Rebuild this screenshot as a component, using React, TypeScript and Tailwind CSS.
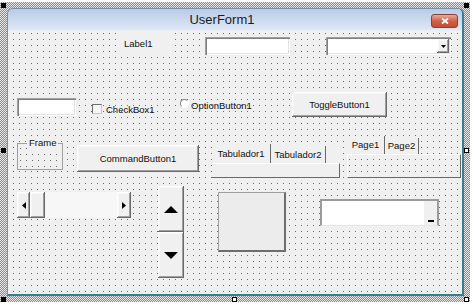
const raised =
  'bg-[#f0f0f0] shadow-[inset_-1px_-1px_#696969,inset_1px_1px_#ffffff,inset_-2px_-2px_#a0a0a0,inset_2px_2px_#f7f7f7]';
const sunken =
  'bg-white shadow-[inset_1px_1px_#a0a0a0,inset_2px_2px_#7f7f7f,inset_-1px_-1px_#ffffff,inset_-2px_-2px_#e3e3e3]';
const dots =
  'bg-[#f0f0f0] bg-[image:conic-gradient(at_1px_1px,transparent_75%,#6a6a6a_0)] bg-[length:6px_6px]';

function Tri({ dir, w, h }: { dir: 'up' | 'down' | 'left' | 'right'; w: number; h: number }) {
  const pts = {
    up: `0,${h} ${w / 2},0 ${w},${h}`,
    down: `0,0 ${w},0 ${w / 2},${h}`,
    left: `${w},0 ${w},${h} 0,${h / 2}`,
    right: `0,0 ${w},${h / 2} 0,${h}`,
  }[dir];
  return (
    <svg width={w} height={h} viewBox={`0 0 ${w} ${h}`} className="block">
      <polygon points={pts} fill="#000" />
    </svg>
  );
}

function Handle({ x, y, white }: { x: string; y: string; white?: boolean }) {
  return (
    <div
      className={`absolute w-[5px] h-[5px] ${x} ${y} ${
        white ? 'bg-white border border-black' : 'bg-black'
      }`}
    />
  );
}

function TitleBar() {
  return (
    <div className="h-[22px] flex items-center bg-gradient-to-b from-[#b8cbe8] to-[#dfe8f5] border-b border-[#e9eef6]">
      <div className="flex-1 pl-[5px] text-center text-[13px] leading-[16px] text-[#1c1c1c]">UserForm1</div>
      <div className="mr-[4px] mt-[2px] w-[27px] h-[14px] rounded-[3px] border border-[#8a4032] bg-gradient-to-b from-[#e6ab9a] via-[#cf6148] to-[#c24d33] flex items-center justify-center">
        <svg width="8" height="6" viewBox="0 0 8 6">
          <path d="M1 0.5 L7 5.5 M7 0.5 L1 5.5" stroke="#fff" strokeWidth="1.8" />
        </svg>
      </div>
    </div>
  );
}

export default function App() {
  return (
    <div className="relative w-[474px] h-[305px] overflow-hidden bg-white font-['Liberation_Sans',Arial,sans-serif] text-[9.5px] leading-[12px] text-[#111]">
      <div className="mt-[2px] w-[470px] h-[300px] pl-[7px] pt-[6px] pr-[6px] pb-[6px] bg-[image:repeating-conic-gradient(#8c8c8c_0_25%,#e6e6e6_0_50%)] bg-[length:2px_2px]">
        <div className="w-full h-full flex flex-col overflow-hidden rounded-t-[6px] border-l border-t border-[#7d8fa6] border-r-2 border-b-2 border-r-[#2f8197] border-b-[#2f8197]">
          <TitleBar />

          {/* design surface */}
          <div className={`relative flex-1 ${dots} bg-[position:5px_2px]`}>
            {/* Label1 */}
            <div className="absolute left-[108px] top-[1px] w-[54px] h-[24px] bg-[#f0f0f0] pl-[8px] pt-[6px]">Label1</div>

            {/* TextBox1 */}
            <div className={`absolute left-[197px] top-[6px] w-[85px] h-[18px] ${sunken}`} />

            {/* ComboBox1 */}
            <div className={`absolute left-[318px] top-[6px] w-[125px] h-[18px] ${sunken}`}>
              <div className={`absolute right-[2px] top-[2px] w-[12px] h-[14px] flex items-center justify-center ${raised}`}>
                <Tri dir="down" w={5} h={3} />
              </div>
            </div>

            {/* TextBox2 */}
            <div className={`absolute left-[9px] top-[67px] w-[59px] h-[18px] ${sunken}`} />

            {/* CheckBox1 */}
            <div className="absolute left-[84px] top-[71px] flex items-center gap-[4px]">
              <div className="w-[10px] h-[10px] bg-[#f7f7f7] border border-t-[#6f6f6f] border-l-[#6f6f6f] border-r-[#c8c8c8] border-b-[#c8c8c8]" />
              <span className="pt-[2px]">CheckBox1</span>
            </div>

            {/* OptionButton1 */}
            <div className="absolute left-[172px] top-[67px] flex items-start gap-[2px]">
              <div className="mt-[1px] w-[9px] h-[9px] rounded-full bg-white border border-t-[#7f7f7f] border-l-[#7f7f7f] border-r-white border-b-white" />
              <span className="pt-[2px]">OptionButton1</span>
            </div>

            {/* ToggleButton1 */}
            <div className={`absolute left-[284px] top-[61px] w-[95px] h-[25px] flex items-center justify-center ${raised}`}>
              ToggleButton1
            </div>

            {/* Frame1 */}
            <div className={`absolute left-[9px] top-[112px] w-[46px] h-[27px] border border-[#a0a0a0] ${dots} bg-[position:2px_4px]`}>
              <span className="absolute left-[9px] -top-[7px] px-[2px] bg-[#f0f0f0]">Frame</span>
            </div>

            {/* CommandButton1 */}
            <div className={`absolute left-[69px] top-[114px] w-[122px] h-[27px] flex items-center justify-center ${raised}`}>
              CommandButton1
            </div>

            {/* TabStrip1 */}
            <div className="absolute left-[204px] top-[113px] w-[128px] h-[34px] flex flex-col bg-[#f0f0f0]">
              <div className="h-[19px] flex items-start">
                <div className="h-[19px] w-[59px] border-r border-[#696969] flex items-center justify-center">Tabulador1</div>
                <div className="mt-[2px] h-[17px] w-[55px] border-r border-[#696969] flex items-center justify-center">Tabulador2</div>
              </div>
              <div className="flex-1 border-t border-t-white border-r border-b border-r-[#696969] border-b-[#696969]" />
            </div>

            {/* MultiPage1 */}
            <div className="absolute left-[337px] top-[105px] w-[116px] h-[42px] flex flex-col">
              <div className="h-[18px] flex items-start pl-[2px]">
                <div className="h-[18px] w-[38px] bg-[#f0f0f0] border-r border-[#696969] flex items-center justify-center">Page1</div>
                <div className="mt-[2px] h-[16px] w-[34px] bg-[#f0f0f0] border-r border-[#696969] flex items-center justify-center">Page2</div>
              </div>
              <div className={`ml-[2px] flex-1 border-t border-l border-t-white border-l-white border-r border-b border-r-[#696969] border-b-[#696969] ${dots} bg-[position:1px_4px]`} />
            </div>

            {/* ScrollBar1 */}
            <div className="absolute left-[9px] top-[161px] w-[114px] h-[26px] flex">
              <div className={`w-[13px] h-full flex items-center justify-center ${raised}`}>
                <Tri dir="left" w={4} h={7} />
              </div>
              <div className={`w-[15px] h-full ${raised}`} />
              <div className="flex-1 h-full bg-[#f7f7f7]" />
              <div className={`w-[14px] h-full flex items-center justify-center ${raised}`}>
                <Tri dir="right" w={4} h={7} />
              </div>
            </div>

            {/* SpinButton1 */}
            <div className="absolute left-[150px] top-[155px] w-[26px] h-[92px] flex flex-col">
              <div className={`h-[46px] flex items-center justify-center ${raised}`}>
                <Tri dir="up" w={14} h={7} />
              </div>
              <div className={`h-[46px] flex items-center justify-center ${raised}`}>
                <Tri dir="down" w={14} h={7} />
              </div>
            </div>

            {/* Image1 */}
            <div className="absolute left-[210px] top-[161px] w-[68px] h-[60px] bg-[#ececec] border border-t-[#a0a0a0] border-l-[#a0a0a0] border-r-2 border-b-2 border-r-[#6e6e6e] border-b-[#6e6e6e]" />

            {/* RefEdit1 */}
            <div className="absolute left-[312px] top-[168px] w-[119px] h-[27px] flex border-t-2 border-l-2 border-r-2 border-[#9b9b9b] border-b border-b-[#e6e6e6] bg-white">
              <div className="flex-1" />
              <div className="w-[13px] bg-[#f0f0f0] flex items-end justify-center pb-[3px]">
                <div className="w-[6px] h-[2px] bg-black" />
              </div>
            </div>
          </div>
        </div>
      </div>

      <Handle x="left-[1px]" y="top-[3px]" />
      <Handle x="left-[464px]" y="top-[3px]" />
      <Handle x="left-[1px]" y="top-[148px]" />
      <Handle x="left-[464px]" y="top-[148px]" white />
      <Handle x="left-[1px]" y="top-[297px]" />
      <Handle x="left-[232px]" y="top-[297px]" white />
      <Handle x="left-[464px]" y="top-[297px]" white />
    </div>
  );
}
